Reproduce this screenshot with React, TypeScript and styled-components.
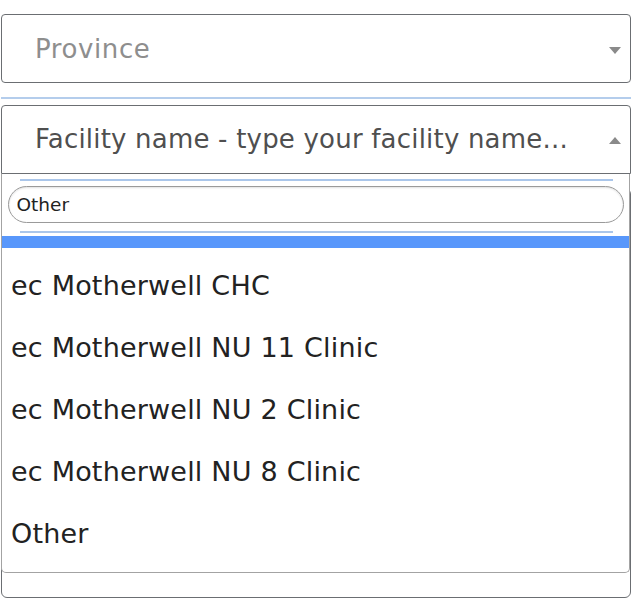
import React, { useLayoutEffect, useRef } from "react";
import styled, { createGlobalStyle } from "styled-components";

const GlobalStyle = createGlobalStyle`
  html, body {
    margin: 0;
    padding: 0;
    background: #fff;
  }
  body {
    font-family: "DejaVu Sans", "Liberation Sans", sans-serif;
  }
  * {
    box-sizing: border-box;
  }
`;

const facilities = [
  "ec Motherwell Clinic",
  "ec Motherwell CHC",
  "ec Motherwell NU 11 Clinic",
  "ec Motherwell NU 2 Clinic",
  "ec Motherwell NU 8 Clinic",
  "Other",
];

const Page = styled.div`
  display: flex;
  flex-direction: column;
  padding: 14px 4px 0 1px;
`;

const SelectBox = styled.div<{ $open?: boolean }>`
  display: flex;
  align-items: center;
  height: 69px;
  padding: 0 9px 0 33px;
  background: #fff;
  border: 1.5px solid #6b6e72;
  border-radius: ${(p) => (p.$open ? "4px 4px 0 0" : "4px")};
`;

const Placeholder = styled.span<{ $dark?: boolean }>`
  flex: 1;
  font-size: 26px;
  letter-spacing: ${(p) => (p.$dark ? "0.2px" : "0.6px")};
  color: ${(p) => (p.$dark ? "#4f4f4f" : "#8e8e8e")};
  white-space: nowrap;
`;

const Arrow = styled.span<{ $up?: boolean }>`
  flex: none;
  width: 0;
  height: 0;
  margin-top: 3px;
  border-left: 6.5px solid transparent;
  border-right: 6.5px solid transparent;
  ${(p) =>
    p.$up ? "border-bottom: 7px solid #8a8a8a;" : "border-top: 7px solid #8a8a8a;"}
`;

const Divider = styled.div`
  height: 1.5px;
  margin: 14px 0 6px;
  background: #b4cdec;
`;

const Field = styled.div`
  position: relative;
`;

const Dropdown = styled.div`
  position: absolute;
  top: 100%;
  left: 0;
  right: 1px;
  z-index: 2;
  padding-bottom: 14px;
  background: #fff;
  border: 1.5px solid #a3a3a3;
  border-top: none;
  border-radius: 0 0 5px 5px;
`;

const HairLine = styled.div<{ $gap: number }>`
  height: 2px;
  margin: ${(p) => p.$gap}px 16.5px 0 17.5px;
  background: #aac6ea;
`;

const SearchInput = styled.input`
  display: block;
  width: calc(100% - 11px);
  height: 37px;
  margin: 5px 5.5px 0;
  padding: 0 8px;
  font-family: inherit;
  font-size: 18.5px;
  line-height: 34px;
  color: #222;
  background: #fff;
  border: 1.5px solid #9a9a9a;
  border-radius: 19px;
  box-shadow: inset 0 1px 2px rgba(0, 0, 0, 0.12);
  outline: none;
`;

const Results = styled.ul`
  height: 322px;
  margin: 3px 0 0;
  padding: 0;
  list-style: none;
  overflow-y: auto;
  scrollbar-width: none;

  &::-webkit-scrollbar {
    display: none;
  }
`;

const Option = styled.li<{ $active?: boolean }>`
  padding: 20px 10px 6px 9px;
  font-size: 27px;
  line-height: 36px;
  letter-spacing: 0.2px;
  white-space: nowrap;
  color: ${(p) => (p.$active ? "#fff" : "#222")};
  background: ${(p) => (p.$active ? "#5897fb" : "transparent")};
`;

const NotesBox = styled.div`
  height: 410px;
  margin-top: 14px;
  border: 1.5px solid #6b6e72;
  border-radius: 6px;
`;

export default function App() {
  const listRef = useRef<HTMLUListElement>(null);

  // keep the list scrolled to the end, like after typing
  useLayoutEffect(() => {
    if (listRef.current) listRef.current.scrollTop = listRef.current.scrollHeight;
  }, []);

  return (
    <>
      <GlobalStyle />
      <Page>
        <SelectBox>
          <Placeholder>Province</Placeholder>
          <Arrow />
        </SelectBox>
        <Divider />
        <Field>
          <SelectBox $open>
            <Placeholder $dark>Facility name - type your facility name...</Placeholder>
            <Arrow $up />
          </SelectBox>
          <Dropdown>
            <HairLine $gap={5} />
            <SearchInput defaultValue="Other" />
            <HairLine $gap={8} />
            <Results ref={listRef}>
              {facilities.map((name, i) => (
                <Option key={name} $active={i === 0}>
                  {name}
                </Option>
              ))}
            </Results>
          </Dropdown>
        </Field>
        <NotesBox />
      </Page>
    </>
  );
}
